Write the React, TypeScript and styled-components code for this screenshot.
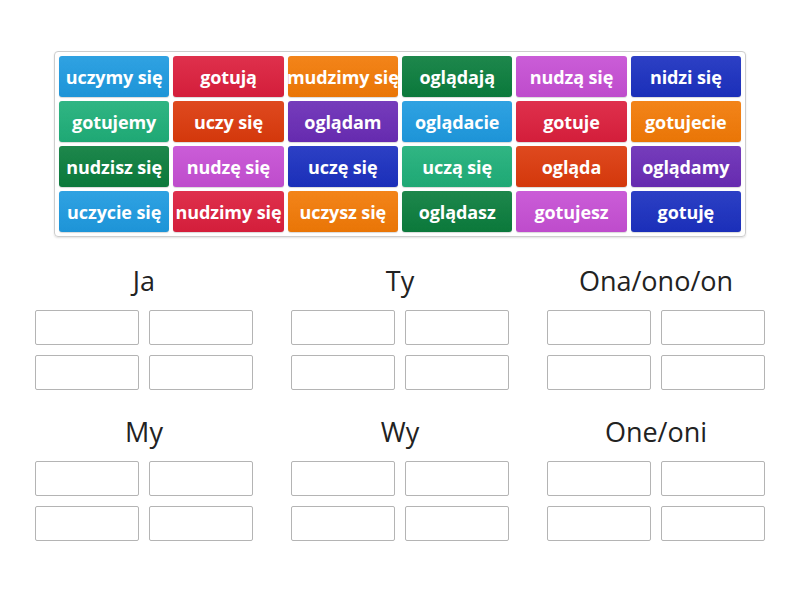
import React from "react";
import styled, { createGlobalStyle } from "styled-components";

type Tone =
  | "sky"
  | "red"
  | "orange"
  | "forest"
  | "orchid"
  | "navy"
  | "mint"
  | "rust"
  | "violet";

const tones: Record<Tone, string> = {
  sky: "#1e9ae0",
  red: "#dc1f3d",
  orange: "#f27a06",
  forest: "#0b7d3d",
  orchid: "#c64fd4",
  navy: "#1b30c0",
  mint: "#1faf79",
  rust: "#dc3a0c",
  violet: "#6a2cb6",
};

const tiles: { word: string; tone: Tone }[] = [
  { word: "uczymy się", tone: "sky" },
  { word: "gotują", tone: "red" },
  { word: "mudzimy się", tone: "orange" },
  { word: "oglądają", tone: "forest" },
  { word: "nudzą się", tone: "orchid" },
  { word: "nidzi się", tone: "navy" },
  { word: "gotujemy", tone: "mint" },
  { word: "uczy się", tone: "rust" },
  { word: "oglądam", tone: "violet" },
  { word: "oglądacie", tone: "sky" },
  { word: "gotuje", tone: "red" },
  { word: "gotujecie", tone: "orange" },
  { word: "nudzisz się", tone: "forest" },
  { word: "nudzę się", tone: "orchid" },
  { word: "uczę się", tone: "navy" },
  { word: "uczą się", tone: "mint" },
  { word: "ogląda", tone: "rust" },
  { word: "oglądamy", tone: "violet" },
  { word: "uczycie się", tone: "sky" },
  { word: "nudzimy się", tone: "red" },
  { word: "uczysz się", tone: "orange" },
  { word: "oglądasz", tone: "forest" },
  { word: "gotujesz", tone: "orchid" },
  { word: "gotuję", tone: "navy" },
];

const groups = ["Ja", "Ty", "Ona/ono/on", "My", "Wy", "One/oni"];

const App: React.FC = () => {
  return (
    <>
      <GlobalStyle />
      <Page>
        <Board>
          {tiles.map((t) => (
            <Tile key={t.word} $tone={t.tone}>
              {t.word}
            </Tile>
          ))}
        </Board>

        <Groups>
          {groups.map((g) => (
            <Group key={g}>
              <Heading>{g}</Heading>
              <Slots>
                <Slot />
                <Slot />
                <Slot />
                <Slot />
              </Slots>
            </Group>
          ))}
        </Groups>
      </Page>
    </>
  );
};

export default App;

const GlobalStyle = createGlobalStyle`
  html, body {
    margin: 0;
    padding: 0;
    background: #ffffff;
  }
  body {
    font-family: "Open Sans", "Noto Sans", sans-serif;
  }
`;

const Page = styled.div`
  width: 800px;
  height: 600px;
  box-sizing: border-box;
  padding-top: 51px;
  display: flex;
  flex-direction: column;
  align-items: flex-start;
`;

const Board = styled.div`
  margin-left: 54px;
  width: 692px;
  box-sizing: border-box;
  padding: 4px;
  border: 1px solid #cdcdcd;
  border-radius: 4px;
  box-shadow: 0 1px 2px rgba(0, 0, 0, 0.12);

  display: grid;
  grid-template-columns: repeat(6, 1fr);
  grid-auto-rows: 41px;
  gap: 4px;
`;

const Tile = styled.div<{ $tone: Tone }>`
  display: flex;
  align-items: center;
  justify-content: center;
  white-space: nowrap;
  overflow: hidden;

  background: linear-gradient(
    to bottom,
    rgba(255, 255, 255, 0.08),
    rgba(0, 0, 0, 0.04)
  ),
  ${({ $tone }) => tones[$tone]};
  border-radius: 3px;
  box-shadow: 0 1px 1px rgba(0, 0, 0, 0.15);

  color: #ffffff;
  font-size: 18px;
  font-weight: 700;
  letter-spacing: -0.1px;
`;

const Groups = styled.div`
  margin-top: 28px;
  margin-left: 35px;
  display: grid;
  grid-template-columns: repeat(3, 218px);
  column-gap: 38px;
  row-gap: 26px;
`;

const Group = styled.div`
  display: flex;
  flex-direction: column;
  align-items: center;
`;

const Heading = styled.div`
  height: 32px;
  line-height: 32px;
  margin-bottom: 13px;
  font-size: 27px;
  font-weight: 400;
  color: #222222;
`;

const Slots = styled.div`
  display: grid;
  grid-template-columns: repeat(2, 104px);
  grid-auto-rows: 35px;
  gap: 10px;
`;

const Slot = styled.div`
  box-sizing: border-box;
  border: 1px solid #b4b4b4;
  border-radius: 2px;
  background: #ffffff;
`;
